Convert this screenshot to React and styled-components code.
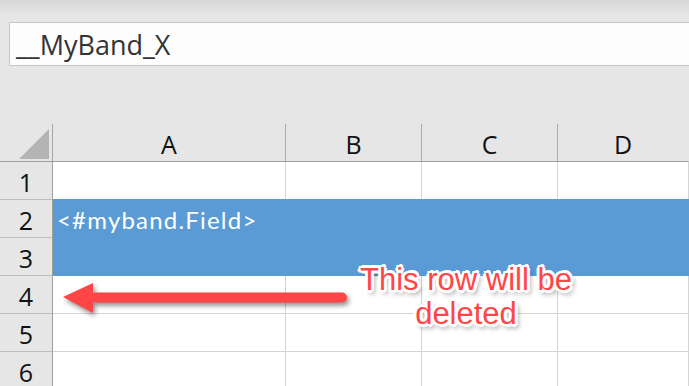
import React from "react";
import styled, { createGlobalStyle } from "styled-components";

const GlobalStyle = createGlobalStyle`
  html, body { margin: 0; padding: 0; background: #e6e6e6; overflow: hidden; }
  * { box-sizing: border-box; }
`;

const Frame = styled.div`
  position: relative;
  width: 689px;
  height: 386px;
  overflow: hidden;
  background: #e6e6e6;
  font-family: "Open Sans", "Noto Sans", sans-serif;
`;

const FormulaArea = styled.div`
  height: 124px;
  padding: 22px 0 0 9px;
  background: linear-gradient(#d8d8d8 0px, #e6e6e6 16px);
`;

const NameBox = styled.div`
  height: 44px;
  display: flex;
  align-items: center;
  padding-left: 6px;
  padding-top: 1px;
  background: #fdfdfd;
  border: 1px solid #c6c6c6;
  border-right: none;
  font-family: "Open Sans", sans-serif;
  font-size: 27px;
  color: #333333;
`;

const Sheet = styled.div`
  display: grid;
  grid-template-columns: 53px 233px 136px 136px 1fr;
  grid-template-rows: 38px repeat(6, 38px);
`;

const Corner = styled.div`
  border-right: 1px solid #a6a6a6;
  border-bottom: 1px solid #9e9e9e;
  display: flex;
  align-items: flex-end;
  justify-content: flex-end;
  padding: 0 3px 2px 0;
`;

const ColHead = styled.div`
  border-right: 1px solid ${(p) => (p.$last ? "transparent" : "#ababab")};
  border-bottom: 1px solid #9e9e9e;
  display: flex;
  align-items: center;
  justify-content: center;
  padding-top: 3px;
  font-size: 25px;
  color: #111111;
`;

const RowHead = styled.div`
  border-right: 1px solid #9e9e9e;
  border-bottom: 1px solid #bcbcbc;
  display: flex;
  align-items: center;
  justify-content: center;
  padding-top: 3px;
  font-size: 25px;
  color: #111111;
  grid-column: 1;
  grid-row: ${(p) => p.$row + 1};
`;

const Cell = styled.div`
  background: #ffffff;
  border-right: 1px solid #d4d4d4;
  border-bottom: 1px solid #d4d4d4;
`;

const Band = styled.div`
  grid-column: 2 / -1;
  grid-row: 3 / 5;
  margin-top: -1px;
  background: #5b9bd5;
`;

const BandText = styled.div`
  height: 38px;
  display: flex;
  align-items: center;
  padding-left: 4px;
  padding-top: 2px;
  font-family: "Lato", "Open Sans", sans-serif;
  font-size: 24px;
  letter-spacing: 1.2px;
  color: #ffffff;
  white-space: nowrap;
`;

const Arrow = styled.svg`
  position: absolute;
  left: 55px;
  top: 275px;
  overflow: visible;
  filter: drop-shadow(2px 3px 2.5px rgba(0, 0, 0, 0.45));
`;

const Callout = styled.div`
  position: absolute;
  left: 336px;
  top: 263px;
  width: 260px;
  text-align: center;
  font-family: "Liberation Sans", Arial, sans-serif;
  font-size: 31px;
  line-height: 34px;
  color: #ff4545;
  text-shadow:
    2px 0 0 #fff, -2px 0 0 #fff, 0 2px 0 #fff, 0 -2px 0 #fff,
    2px 2px 0 #fff, -2px -2px 0 #fff, 2px -2px 0 #fff, -2px 2px 0 #fff,
    3px 1px 0 #fff, -3px 1px 0 #fff, 1px 3px 0 #fff, 1px -3px 0 #fff,
    3px 4px 5px rgba(0, 0, 0, 0.5);
`;

const cols = ["A", "B", "C", "D"];
const rows = [1, 2, 3, 4, 5, 6];

export default function App() {
  return (
    <Frame>
      <GlobalStyle />
      <FormulaArea>
        <NameBox>__MyBand_X</NameBox>
      </FormulaArea>
      <Sheet>
        <Corner>
          <svg width="30" height="30" viewBox="0 0 30 30">
            <polygon points="30,0 30,30 0,30" fill="#b4b4b4" />
          </svg>
        </Corner>
        {cols.map((c, i) => (
          <ColHead key={c} $last={i === cols.length - 1}>
            {c}
          </ColHead>
        ))}
        {rows.map((r) => (
          <RowHead key={`h${r}`} $row={r}>
            {r}
          </RowHead>
        ))}
        {rows.map((r) =>
          r === 2 || r === 3
            ? null
            : cols.map((c, i) => (
                <Cell
                  key={`${c}${r}`}
                  style={{ gridRow: r + 1, gridColumn: i + 2 }}
                />
              ))
        )}
        <Band>
          <BandText>&lt;#myband.Field&gt;</BandText>
        </Band>
      </Sheet>
      <Arrow width="300" height="50" viewBox="0 0 300 50">
        <polygon points="8,22 38,8 38,38" fill="#ff4545" />
        <rect x="36" y="17.5" width="256" height="10" rx="5" fill="#ff4545" />
      </Arrow>
      <Callout>
        This row will be
        <br />
        deleted
      </Callout>
    </Frame>
  );
}
